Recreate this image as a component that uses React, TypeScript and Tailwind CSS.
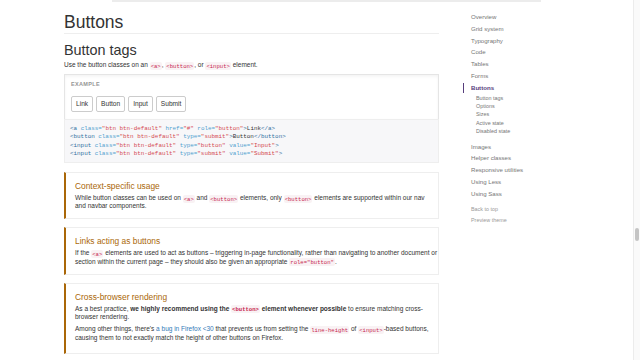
import React from "react";

const sans = "font-['Liberation_Sans',Arial,sans-serif]";
const mono = "font-['Liberation_Mono','DejaVu_Sans_Mono',monospace]";

function C({ children }: { children: React.ReactNode }) {
    return (
        <code className={`${mono} text-[5.6px] leading-none text-[#c7254e] bg-[#f9f2f4] px-[1px] py-[0.5px] rounded-[2px]`}>
            {children}
        </code>
    );
}

// tag / attribute / string spans for the highlighted snippet
const T = ({ c }: { c: string }) => <span className="text-[#2f6f9f]">{c}</span>;
const A = ({ c }: { c: string }) => <span className="text-[#4f9fcf]">{c}</span>;
const S = ({ c }: { c: string }) => <span className="text-[#d44950]">{c}</span>;

function Callout({ title, children, tall }: { title: string; children: React.ReactNode; tall?: boolean }) {
    return (
        <div className={`border border-[#eeeeee] border-l-2 border-l-[#aa6708] pt-[8px] pl-[9px] pr-[4px] ${tall ? "pb-[11px]" : "pb-[7.5px]"}`}>
            <h4 className="text-[8.4px] leading-[10px] text-[#aa6708] mb-[3px]">{title}</h4>
            {children}
        </div>
    );
}

const mainNav = ["Overview", "Grid system", "Typography", "Code", "Tables", "Forms"];
const subNav = ["Button tags", "Options", "Sizes", "Active state", "Disabled state"];
const restNav = ["Images", "Helper classes", "Responsive utilities", "Using Less", "Using Sass"];

export default function App() {
    return (
        <div className={`${sans} w-[640px] h-[360px] bg-white text-[#333333] flex overflow-hidden`}>
            <div className="flex-1 flex flex-col">
                <div className="h-[2px] ml-[112px] w-[429px] bg-[#ececec]" />

                <div className="flex">
                    {/* main column */}
                    <div className="ml-[64px] w-[375px] flex flex-col">
                        <h1 className="mt-[10px] text-[17.5px] leading-[20px] pb-[1px] border-b border-[#eeeeee]">Buttons</h1>
                        <h2 className="mt-[7.5px] text-[14.4px] leading-[16px]">Button tags</h2>
                        <p className="mt-[2.5px] text-[6.5px] leading-[10px] whitespace-nowrap">
                            Use the button classes on an <C>&lt;a&gt;</C>, <C>&lt;button&gt;</C>, or <C>&lt;input&gt;</C> element.
                        </p>

                        <div className="mt-[4px] border-t border-x border-[#e5e5e5] shadow-[inset_0_1.5px_3px_rgba(0,0,0,0.05)] pt-[6px] pb-[7.5px] px-[6px]">
                            <div className="text-[5.5px] leading-[7px] font-bold tracking-[0.35px] text-[#959595]">EXAMPLE</div>
                            <div className="mt-[8px] flex gap-[3px]">
                                {["Link", "Button", "Input", "Submit"].map((b) => (
                                    <div
                                        key={b}
                                        className="h-[15.5px] px-[4px] flex items-center text-[6.6px] border border-[#cccccc] rounded-[2px] bg-white text-[#333333]"
                                    >
                                        {b}
                                    </div>
                                ))}
                            </div>
                        </div>
                        <pre className={`${mono} text-[5.9px] leading-[8.4px] bg-[#f7f7f9] border border-[#eeeeee] pt-[4.8px] pb-[3.6px] px-[5px] text-[#333333]`}>
                            <T c="<a" /> <A c="class=" /><S c={'"btn btn-default"'} /> <A c="href=" /><S c={'"#"'} /> <A c="role=" /><S c={'"button"'} /><T c=">" />Link<T c="</a>" />
                            {"\n"}
                            <T c="<button" /> <A c="class=" /><S c={'"btn btn-default"'} /> <A c="type=" /><S c={'"submit"'} /><T c=">" />Button<T c="</button>" />
                            {"\n"}
                            <T c="<input" /> <A c="class=" /><S c={'"btn btn-default"'} /> <A c="type=" /><S c={'"button"'} /> <A c="value=" /><S c={'"Input"'} /><T c=">" />
                            {"\n"}
                            <T c="<input" /> <A c="class=" /><S c={'"btn btn-default"'} /> <A c="type=" /><S c={'"submit"'} /> <A c="value=" /><S c={'"Submit"'} /><T c=">" />
                        </pre>

                        <div className="mt-[9px] flex flex-col gap-[8px] text-[6.5px] leading-[8.4px] whitespace-nowrap">
                            <Callout title="Context-specific usage">
                                <p>
                                    While button classes can be used on <C>&lt;a&gt;</C> and <C>&lt;button&gt;</C> elements, only <C>&lt;button&gt;</C> elements are supported within our nav
                                    <br />
                                    and navbar components.
                                </p>
                            </Callout>
                            <Callout title="Links acting as buttons">
                                <p>
                                    If the <C>&lt;a&gt;</C> elements are used to act as buttons – triggering in-page functionality, rather than navigating to another document or
                                    <br />
                                    section within the current page – they should also be given an appropriate <C>role="button"</C>.
                                </p>
                            </Callout>
                            <Callout title="Cross-browser rendering" tall>
                                <p>
                                    As a best practice, <strong>we highly recommend using the <C>&lt;button&gt;</C> element whenever possible</strong> to ensure matching cross-
                                    <br />
                                    browser rendering.
                                </p>
                                <p className="mt-[4px]">
                                    Among other things, there's <span className="text-[#337ab7]">a bug in Firefox &lt;30</span> that prevents us from setting the <C>line-height</C> of <C>&lt;input&gt;</C>-based buttons,
                                    <br />
                                    causing them to not exactly match the height of other buttons on Firefox.
                                </p>
                            </Callout>
                        </div>
                    </div>

                    {/* side nav */}
                    <div className="ml-[24px] w-[150px] mt-[9px] flex flex-col text-[6.1px] text-[#767676]">
                        {mainNav.map((n) => (
                            <div key={n} className="h-[11.8px] leading-[11.8px] pl-[8px]">{n}</div>
                        ))}
                        <div className="h-[11.8px] flex items-center">
                            <div className="h-[10px] border-l border-[#563d7c] pl-[7px] leading-[10px] font-bold text-[#563d7c]">Buttons</div>
                        </div>
                        {subNav.map((n) => (
                            <div key={n} className="h-[8.4px] leading-[8.4px] pl-[13px] text-[5.4px]">{n}</div>
                        ))}
                        <div className="mt-[5px]" />
                        {restNav.map((n) => (
                            <div key={n} className="h-[11.8px] leading-[11.8px] pl-[8px]">{n}</div>
                        ))}
                        <div className="mt-[4px] h-[11.6px] leading-[11.6px] pl-[8px] text-[5.4px] text-[#999999]">Back to top</div>
                        <div className="h-[11.6px] leading-[11.6px] pl-[8px] text-[5.4px] text-[#999999]">Preview theme</div>
                    </div>
                </div>
            </div>

            {/* scrollbar */}
            <div className="w-[7px] h-full border-l border-[#ececec] bg-[#fafafa]">
                <div className="mt-[228px] ml-[1px] w-[3.5px] h-[13px] rounded-[2px] bg-[#c4c4c4]" />
            </div>
        </div>
    );
}
